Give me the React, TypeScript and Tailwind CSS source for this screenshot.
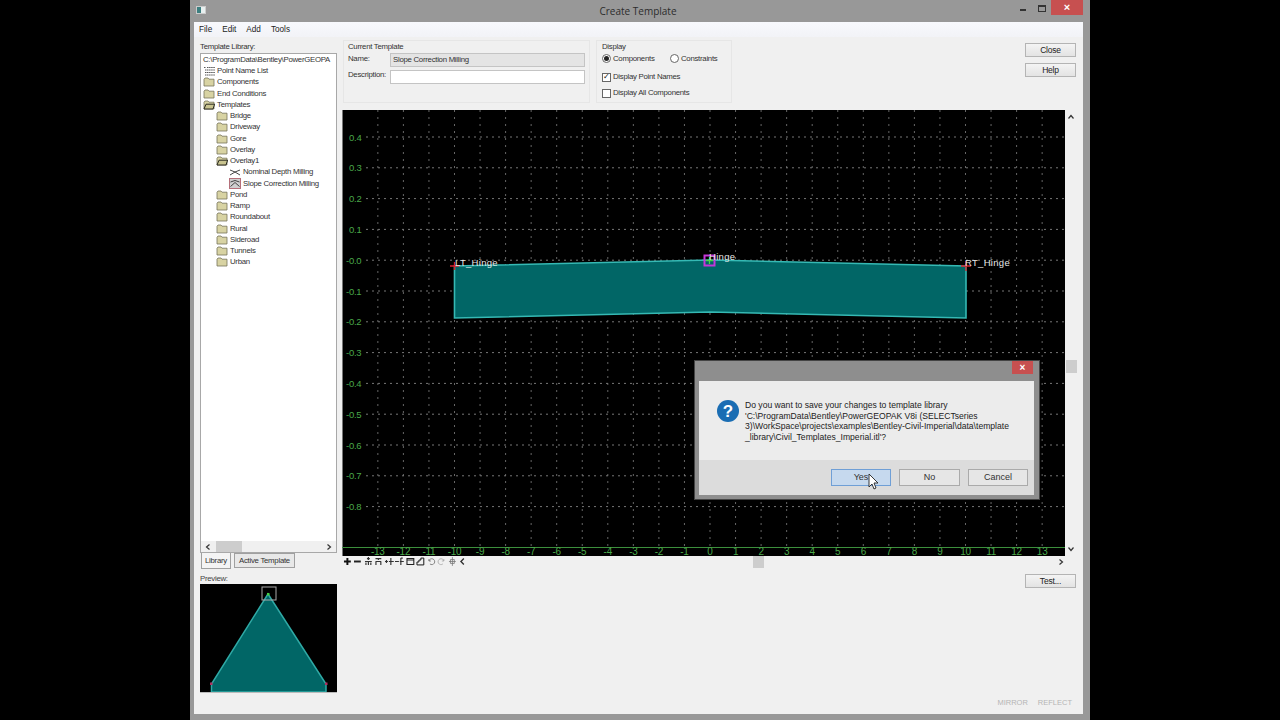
const font = "font-['Liberation_Sans',Arial,sans-serif]";

const treeRows = [
  { label: "Point Name List", level: 0, icon: "list" },
  { label: "Components", level: 0, icon: "folder" },
  { label: "End Conditions", level: 0, icon: "folder" },
  { label: "Templates", level: 0, icon: "open" },
  { label: "Bridge", level: 1, icon: "folder" },
  { label: "Driveway", level: 1, icon: "folder" },
  { label: "Gore", level: 1, icon: "folder" },
  { label: "Overlay", level: 1, icon: "folder" },
  { label: "Overlay1", level: 1, icon: "open" },
  { label: "Nominal Depth Milling", level: 2, icon: "nominal" },
  { label: "Slope Correction Milling", level: 2, icon: "slope" },
  { label: "Pond", level: 1, icon: "folder" },
  { label: "Ramp", level: 1, icon: "folder" },
  { label: "Roundabout", level: 1, icon: "folder" },
  { label: "Rural", level: 1, icon: "folder" },
  { label: "Sideroad", level: 1, icon: "folder" },
  { label: "Tunnels", level: 1, icon: "folder" },
  { label: "Urban", level: 1, icon: "folder" },
];

const toolIcons = [
  { d: "M1 4.5h7M4.5 1v7", w: 2, c: "#111" },
  { d: "M1 4.5h7", w: 2, c: "#222" },
  { d: "M4.5 0v3M3 1.5h3M1 4.5h7M2 8V5.5M7 8V5.5M4.5 5v3", w: 1.2, c: "#333" },
  { d: "M1.5 1.5h6M1.5 4.5h6M2 8V5M7 8V5M4.5 1v2", w: 1.2, c: "#333" },
  { d: "M0 4.5h3M1.5 3v3M6 1v7M4 4.5h5", w: 1.2, c: "#333" },
  { d: "M0 4.5h4M6 1v7M5 4.5h4M6 1h2", w: 1.2, c: "#333" },
  { d: "M1 1.5h7v6H1zM1 3h7", w: 1.1, c: "#222" },
  { d: "M1 8V5h2V3h2V1h3v7z", w: 1, c: "#111" },
  { d: "M2 4a3 3 0 1 1 1 3M2 2v2h2", w: 0.9, c: "#777" },
  { d: "M7 4a3 3 0 1 0-1 3M7 2v2H5", w: 0.9, c: "#aaa" },
  { d: "M4.5 0v9M1 4.5h7M2.5 2.5h4v4h-4z", w: 0.8, c: "#777" },
  { d: "M6 1.5 3 4.5l3 3", w: 1.4, c: "#333" },
];

const yLabels = ["0.4", "0.3", "0.2", "0.1", "-0.0", "-0.1", "-0.2", "-0.3", "-0.4", "-0.5", "-0.6", "-0.7", "-0.8"];
const xValues = Array.from({ length: 27 }, (_, i) => i - 13);

function Folder({ open }: { open?: boolean }) {
  return (
    <svg width="12" height="10" viewBox="0 0 12 10" className="shrink-0">
      <path d="M1 2.2 2 1h3l1 1.2h5V9H1z" fill="#d8d3a3" stroke="#77735a" strokeWidth="0.8" />
      {open && <path d="M1 9 3 4.2h8.6L10 9z" fill="#c9c48f" stroke="#2a2a20" strokeWidth="1" />}
    </svg>
  );
}

function TreeIcon({ kind }: { kind: string }) {
  if (kind === "folder") return <Folder />;
  if (kind === "open") return <Folder open />;
  if (kind === "list")
    return (
      <svg width="12" height="10" viewBox="0 0 12 10" className="shrink-0">
        <path d="M4 1.5h8M4 4h8M4 6.5h8M4 9h8M1 1.5h1.5M2 4h1.500M2 6.500h1.500M2 9h1.500" stroke="#555" strokeWidth="1" strokeDasharray="1.500 .6" />
      </svg>
    );
  if (kind === "nominal")
    return (
      <svg width="12" height="10" viewBox="0 0 12 10" className="shrink-0">
        <path d="M1 3 6 5l5-2M1 8l5-3 5 3" stroke="#333" strokeWidth="0.9" fill="none" />
      </svg>
    );
  return (
    <svg width="12" height="11" viewBox="0 0 12 11" className="shrink-0">
      <rect x="0.5" y="0.500" width="11" height="10" fill="#cfcfcf" stroke="#b5707a" />
      <path d="M1.500 4 6 2.500 10.500 4M1.500 8.500 6 4.500l4.500 4" stroke="#333" strokeWidth="0.9" fill="none" />
    </svg>
  );
}

function WinButton({ children, className }: { children: string; className: string }) {
  return (
    <div className={`flex items-center justify-center border border-[#b4b4b4] bg-gradient-to-b from-[#f4f4f4] to-[#e3e3e3] text-[8.500px] tracking-[-0.200px] text-[#222] ${className}`}>
      {children}
    </div>
  );
}

function Chevron({ dir }: { dir: "l" | "r" | "u" | "d" }) {
  const paths = { l: "M5.500 1.500 2.500 4l3 2.500", r: "M2.500 1.500 5.500 4l-3 2.500", u: "M1.500 5.500 4 2.500l2.500 3", d: "M1.500 2.500 4 5.500l2.500-3" };
  return (
    <svg width="8" height="8" viewBox="0 0 8 8">
      <path d={paths[dir]} stroke="#333" strokeWidth="1.200" fill="none" />
    </svg>
  );
}

function Drawing() {
  const xAt = (v: number) => 368 + 25.55 * v;
  const yAt = (i: number) => 27 + 30.8 * i;
  return (
    <svg width="723" height="446" viewBox="0 0 723 446" className="block bg-black">
      {xValues.map((v) => (
        <line key={v} x1={xAt(v)} x2={xAt(v)} y1="0" y2="437" stroke="#666" strokeDasharray="2 5" />
      ))}
      {yLabels.map((_, i) => (
        <line key={i} x1="24" x2="723" y1={yAt(i)} y2={yAt(i)} stroke="#777" strokeDasharray="2 4" />
      ))}
      <line x1="0.500" x2="0.500" y1="0" y2="446" stroke="#777" />
      <line x1="0" x2="723" y1="437.500" y2="437.500" stroke="#3c8f3c" />
      {yLabels.map((label, i) => (
        <text key={label} x={label.length > 3 ? 4 : 7} y={yAt(i) + 3.500} fontSize="9.500" fill="#4aa84a" fontFamily="Liberation Sans">
          {label}
        </text>
      ))}
      {xValues.map((v) => (
        <text key={v} x={xAt(v)} y="445" fontSize="10" fill="#4aa84a" textAnchor="middle" fontFamily="Liberation Sans">
          {v}
        </text>
      ))}
      <path d="M112.500 156 368 150 624 156V208L368 202 112.500 208Z" fill="#016666" stroke="#35b9b4" strokeWidth="1.600" />
      <path d="M108 156h9M112.500 152v8" stroke="#d3212c" strokeWidth="1.300" />
      <path d="M619 156h10M624 151v10" stroke="#d3212c" strokeWidth="1.300" />
      <rect x="362.500" y="145.500" width="10" height="10" fill="none" stroke="#c436d8" strokeWidth="2" />
      <path d="M364 150.500h7M367.500 147v7" stroke="#46d846" strokeWidth="1.300" />
      <g fill="#e8e8e8" fontSize="9.500" fontFamily="Liberation Sans" letterSpacing="0.300">
        <text x="113" y="156">LT_Hinge</text>
        <text x="367" y="150">Hinge</text>
        <text x="623" y="156">RT_Hinge</text>
      </g>
    </svg>
  );
}

function Preview() {
  return (
    <svg width="137" height="109" viewBox="0 0 137 109" className="block bg-black">
      <path d="M11.500 108V100L68 10 126 100V108Z" fill="#016666" stroke="#2fa9a5" strokeWidth="1.500" />
      <rect x="62" y="3" width="14" height="13" fill="none" stroke="#aaa" />
      <rect x="67" y="9" width="2.500" height="2.500" fill="#45d045" />
      <rect x="10" y="98.500" width="2.500" height="2.500" fill="#b03060" />
      <rect x="125" y="98.500" width="2.500" height="2.500" fill="#b03060" />
      <line x1="0" x2="137" y1="108.500" y2="108.500" stroke="#bbb" />
    </svg>
  );
}

function SaveDialog() {
  return (
    <div className="absolute left-[694px] top-[360px] flex h-[140px] w-[346px] flex-col border border-[#444] bg-[#8e8e8e] pb-[4px] pl-[4px] pr-[5px]">
      <div className="flex h-[20px] shrink-0 items-start justify-end pr-[1px]">
        <div className="flex h-[13px] w-[21px] items-center justify-center bg-[#c75050] text-[10px] font-bold leading-none text-white">×</div>
      </div>
      <div className="flex flex-1 flex-col bg-[#ececec]">
        <div className="flex flex-1 pl-[18px] pt-[19px]">
          <div className="flex h-[22px] w-[22px] shrink-0 items-center justify-center rounded-full bg-[#1a6db3] text-[17px] font-bold leading-none text-white">?</div>
          <p className="ml-[6px] w-[270px] text-[8.600px] leading-[10.500px] text-[#222]">
            Do you want to save your changes to template library
            <br />
            'C:\ProgramData\Bentley\PowerGEOPAK V8i (SELECTseries
            <br />
            3)\WorkSpace\projects\examples\Bentley-Civil-Imperial\data\template
            <br />
            _library\Civil_Templates_Imperial.itl'?
          </p>
        </div>
        <div className="flex h-[35px] shrink-0 items-center justify-end gap-[8px] bg-[#dcdcdc] pr-[6px]">
          <div className="relative flex h-[17px] w-[60px] items-center justify-center border border-[#6f9fd6] bg-[#c6d9ee] text-[9px] text-[#333]">
            Yes
            <svg width="12" height="18" viewBox="0 0 12 18" className="absolute left-[36px] top-[3px]">
              <path d="M1 1v13l3-3 2 5 2-1-2-5h4z" fill="#fff" stroke="#222" strokeWidth="0.900" />
            </svg>
          </div>
          <div className="flex h-[17px] w-[61px] items-center justify-center border border-[#aaa] bg-[#e6e6e6] text-[9px] text-[#333]">No</div>
          <div className="flex h-[17px] w-[60px] items-center justify-center border border-[#aaa] bg-[#e6e6e6] text-[9px] text-[#333]">Cancel</div>
        </div>
      </div>
    </div>
  );
}

export default function App() {
  return (
    <div className={`${font} relative h-[720px] w-[1280px] overflow-hidden bg-black text-[8px] text-[#333]`}>
      <div className="ml-[190px] flex h-[720px] w-[900px] flex-col bg-[#989898] pb-[6px] pl-[4px] pr-[7px]">
        {/* title bar */}
        <div className="grid h-[22px] shrink-0 grid-cols-[1fr_auto_1fr] items-start">
          <div className="pl-[2px] pt-[6px]">
            <div className="flex h-[8px] w-[10px] border border-[#ccc] bg-[#e8f0f0]">
              <div className="h-full w-[4px] bg-[#3d7f80]" />
            </div>
          </div>
          <div className="pr-[1px] pt-[4px] font-['Open_Sans',sans-serif] text-[10px] leading-[14px] text-[#2c2c2c]">Create Template</div>
          <div className="flex items-start justify-end">
            <div className="mt-[9px] h-[1.500px] w-[6px] bg-[#333]" />
            <div className="ml-[12px] mt-[5px] h-[7px] w-[8px] border border-t-2 border-[#333]" />
            <div className="ml-[5px] flex h-[15px] w-[32px] items-center justify-center bg-[#c75050] text-[11px] font-bold leading-none text-white">×</div>
          </div>
        </div>

        <div className="flex min-h-0 flex-1 flex-col bg-[#f0f0f0]">
          {/* menu */}
          <div className="flex h-[15px] shrink-0 items-center gap-[10px] bg-gradient-to-b from-[#f8f9fd] to-[#f2f3f7] pl-[5px] pt-[1px] text-[8.200px] text-[#222]">
            <span>File</span>
            <span>Edit</span>
            <span>Add</span>
            <span>Tools</span>
          </div>

          <div className="flex min-h-0 flex-1 pl-[6px] text-[7.800px] leading-[10px] tracking-[-0.270px]">
            {/* left column */}
            <div className="flex w-[137px] shrink-0 flex-col">
              <div className="flex h-[16px] shrink-0 items-end pb-[1px]">Template Library:</div>
              <div className="flex h-[500px] shrink-0 flex-col border border-[#a8a8a8] bg-white">
                <div className="min-h-0 flex-1 overflow-hidden">
                  <div className="flex h-[11.600px] items-center whitespace-nowrap pl-[2px]">C:\ProgramData\Bentley\PowerGEOPA</div>
                  {treeRows.map((row) => (
                    <div
                      key={row.label}
                      className={`flex h-[11.250px] items-center gap-[2px] whitespace-nowrap ${row.level === 0 ? "pl-[2px]" : row.level === 1 ? "pl-[15px]" : "pl-[28px]"}`}
                    >
                      <TreeIcon kind={row.icon} />
                      <span>{row.label}</span>
                    </div>
                  ))}
                </div>
                <div className="flex h-[11px] shrink-0 items-center bg-[#f0f0f0] px-[3px]">
                  <Chevron dir="l" />
                  <div className="ml-[4px] h-full w-[26px] bg-[#cdcdcd]" />
                  <div className="flex-1" />
                  <Chevron dir="r" />
                </div>
              </div>
              <div className="flex h-[17px] shrink-0 items-start whitespace-nowrap pl-[1px]">
                <div className="flex h-[16px] w-[30px] items-center justify-center border-x border-b border-[#a0a0a0] bg-[#f4f4f4] pt-[1px]">Library</div>
                <div className="ml-[3px] flex h-[15px] w-[61px] items-center justify-center border border-[#a0a0a0] bg-[#e8e8e8] pt-[1px]">Active Template</div>
              </div>
              <div className="flex h-[14px] shrink-0 items-end text-[#444]">Preview:</div>
              <Preview />
            </div>

            {/* right column */}
            <div className="ml-[5px] flex w-[735px] shrink-0 flex-col">
              <div className="flex h-[73px] shrink-0 pt-[3px]">
                <div className="ml-[1px] h-[63px] w-[247px] border border-[#e6e6e6] pl-[4px] pt-[1px]">
                  <div className="h-[10px]">Current Template</div>
                  <div className="mt-[1px] flex h-[14px] items-center">
                    <span className="w-[42px] -translate-y-[1px]">Name:</span>
                    <div className="flex h-[14px] w-[195px] items-center border border-[#c4c4c4] bg-[#e4e4e4] pl-[2px]">Slope Correction Milling</div>
                  </div>
                  <div className="mt-[3px] flex h-[14px] items-center">
                    <span className="w-[42px] -translate-y-[2px]">Description:</span>
                    <div className="h-[14px] w-[195px] border border-[#c4c4c4] bg-white" />
                  </div>
                </div>
                <div className="ml-[6px] h-[63px] w-[136px] border border-[#e6e6e6] pl-[5px] pt-[1px]">
                  <div className="h-[10px]">Display</div>
                  <div className="mt-[1px] flex h-[11px] items-center">
                    <div className="flex h-[9px] w-[9px] items-center justify-center rounded-full border border-[#666] bg-white">
                      <div className="h-[5px] w-[5px] rounded-full bg-[#222]" />
                    </div>
                    <span className="ml-[2px] w-[42px]">Components</span>
                    <div className="ml-[15px] h-[9px] w-[9px] rounded-full border border-[#666] bg-white" />
                    <span className="ml-[2px]">Constraints</span>
                  </div>
                  <div className="mt-[8px] flex h-[10px] items-center">
                    <div className="flex h-[9px] w-[9px] items-center justify-center border border-[#666] bg-white text-[8px] leading-none text-[#111]">✓</div>
                    <span className="ml-[2px]">Display Point Names</span>
                  </div>
                  <div className="mt-[6px] flex h-[10px] items-center">
                    <div className="h-[9px] w-[9px] border border-[#666] bg-white" />
                    <span className="ml-[2px]">Display All Components</span>
                  </div>
                </div>
                <div className="ml-auto flex flex-col gap-[6px] pr-[1px] pt-[3px]">
                  <WinButton className="h-[14px] w-[51px]">Close</WinButton>
                  <WinButton className="h-[14px] w-[51px]">Help</WinButton>
                </div>
              </div>

              <div className="flex h-[446px] shrink-0">
                <Drawing />
                <div className="flex w-[12px] flex-col items-center bg-[#f0f0f0] py-[3px]">
                  <Chevron dir="u" />
                  <div className="mt-[239px] h-[13px] w-[11px] bg-[#cdcdcd]" />
                  <div className="mt-auto">
                    <Chevron dir="d" />
                  </div>
                </div>
              </div>

              <div className="flex h-[11px] shrink-0 items-center pl-[1px]">
                <div className="flex w-[124px] items-center gap-[1.700px]">
                  {toolIcons.map((icon) => (
                    <svg key={icon.d} width="9" height="9" viewBox="0 0 9 9" fill="none">
                      <path d={icon.d} stroke={icon.c} strokeWidth={icon.w} />
                    </svg>
                  ))}
                </div>
                <div className="ml-[286px] h-[12px] w-[11px] bg-[#cdcdcd]" />
                <div className="ml-[293px]">
                  <Chevron dir="r" />
                </div>
              </div>

              <div className="flex justify-end pr-[1px] pt-[7px]">
                <WinButton className="h-[14px] w-[51px]">Test...</WinButton>
              </div>
              <div className="mt-auto flex justify-end gap-[10px] pb-[6px] pr-[5px] text-[7.500px] tracking-normal text-[#b5b5b5]">
                <span>MIRROR</span>
                <span>REFLECT</span>
              </div>
            </div>
          </div>
        </div>
      </div>
      <SaveDialog />
    </div>
  );
}
